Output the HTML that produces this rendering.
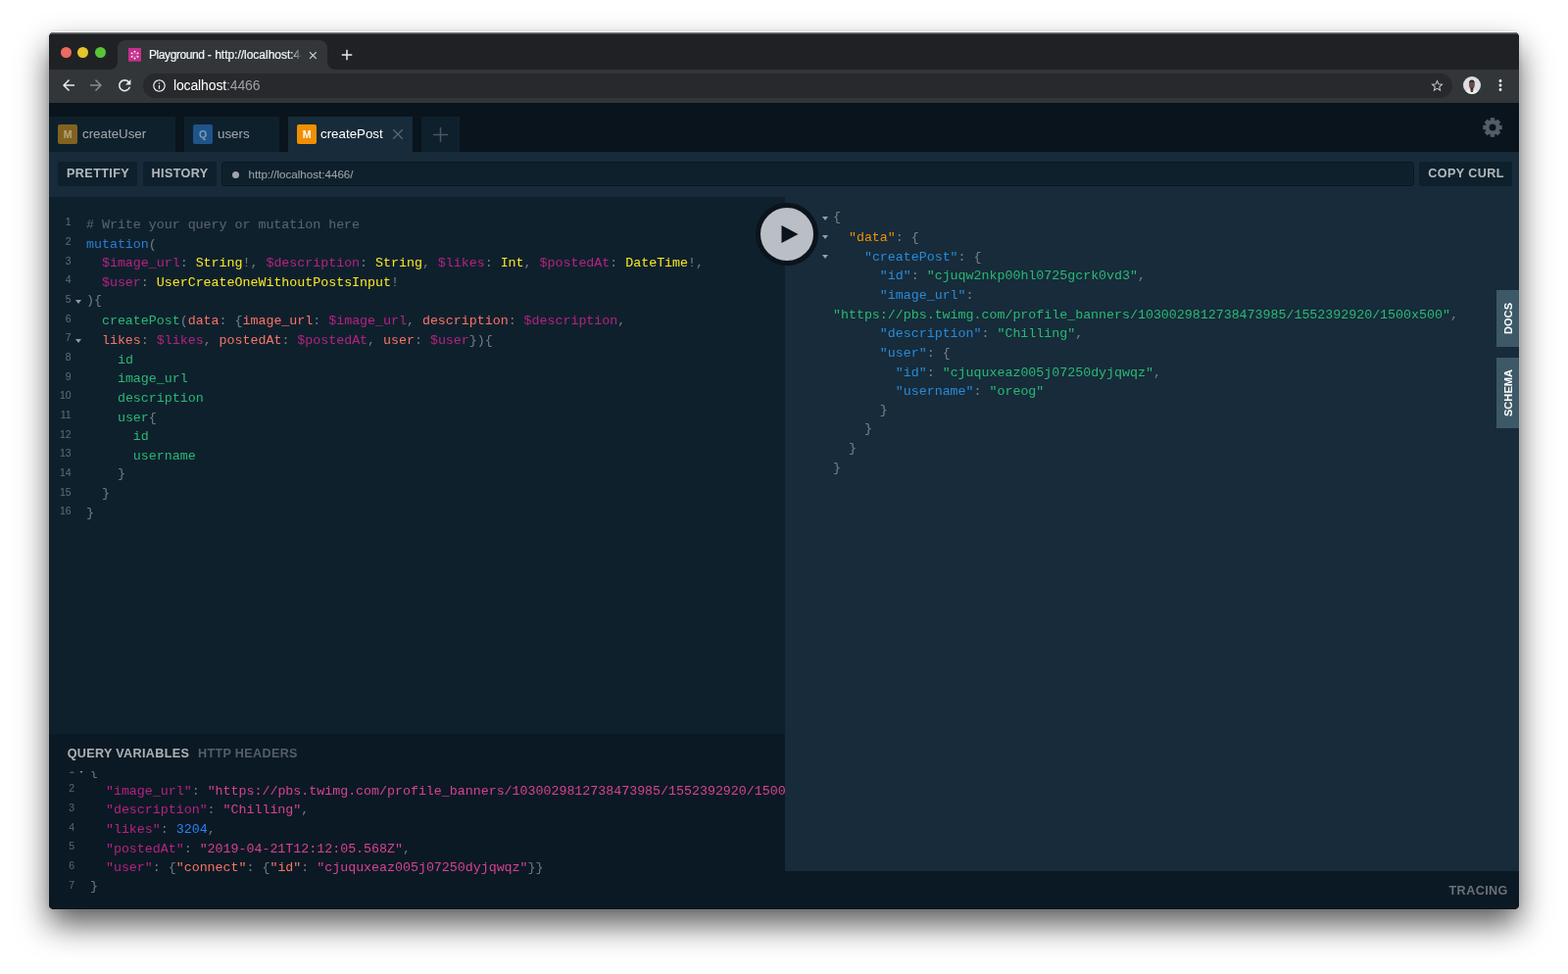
<!DOCTYPE html>
<html lang="en">
<head>
<meta charset="utf-8">
<title>Playground - http://localhost:4466</title>
<style>
*{box-sizing:border-box;margin:0;padding:0}
html,body{width:1600px;height:994px;background:#fff;overflow:hidden}
body{position:relative;font-family:"Liberation Sans",Arial,sans-serif;-webkit-font-smoothing:antialiased}
.abs{position:absolute}
#shadow{position:absolute;left:50px;top:33px;width:1500px;height:895px;border-radius:6px;
  box-shadow:0 0 0 1px rgba(255,255,255,.13),0 0 4px rgba(0,0,0,.18),0 16px 32px 0 rgba(0,0,0,.64)}
#win{position:absolute;left:50px;top:33px;width:1500px;height:895px;border-radius:5px;overflow:hidden;background:#0f202d;will-change:transform;transform:translateZ(0)}
/* ---------- chrome ---------- */
#strip{left:0;top:0;width:1500px;height:38px;background:#202124}
#hl{left:0;top:0;width:1500px;height:2px;background:linear-gradient(#75787b 0,#75787b 1px,#484b50 1px,#484b50 2px)}
#tl{position:absolute;left:53px;top:32px;width:1494px;height:1px;background:rgba(255,255,255,.75)}
.tl{width:11px;height:11px;border-radius:50%;top:14.6px}
#ctab{left:70px;top:8px;width:214px;height:30px;background:#323639;border-radius:8px 8px 0 0}
#ctab:before,#ctab:after{content:"";position:absolute;bottom:0;width:8px;height:8px;background:radial-gradient(circle at 0 0,rgba(50,54,57,0) 7.5px,#323639 8.5px)}
#ctab:before{left:-8px}
#ctab:after{right:-8px;transform:scaleX(-1)}
#fav{left:81px;top:17px;width:13px;height:13px;background:#d5309b}
#ctitle{-webkit-text-stroke:.2px #f1f3f4;left:102px;top:16px;width:156px;height:15px;font-size:12px;line-height:15px;color:#f1f3f4;white-space:nowrap;overflow:hidden;
  -webkit-mask-image:linear-gradient(90deg,#000 145px,transparent 156px);mask-image:linear-gradient(90deg,#000 145px,transparent 156px)}
#tbar{left:0;top:38px;width:1500px;height:33.5px;background:#323639;z-index:3}
#omni{left:95.8px;top:42.2px;width:1336px;height:24.8px;border-radius:12.4px;background:#27292c;z-index:4}
#url{z-index:5;left:127px;top:46px;font-size:14px;line-height:17px;color:#fff;white-space:nowrap;letter-spacing:-.14px}
#url i{font-style:normal;color:#9aa0a6}
/* ---------- playground ---------- */
#pg{left:0;top:71px;width:1500px;height:824px;background:#09141c}
.tab{top:15px;height:36px;background:#0f202d}
.tab.on{background:#172b3a}
.ico{top:8px;width:20px;height:20px;border-radius:2px;color:#fff;font-size:10.5px;font-weight:bold;line-height:20px;text-align:center}
.tn{top:9px;font-size:13.33px;line-height:18px;color:rgba(255,255,255,.6);white-space:nowrap}
#nav{left:0;top:51px;width:1500px;height:46px;background:#172b3a}
.btn{top:10px;height:25px;background:#0f202d;border-radius:2px;color:rgba(255,255,255,.68);font-size:12.6px;font-weight:bold;line-height:25px;text-align:center;white-space:nowrap;letter-spacing:.4px;padding-left:1.2px}
#ep{left:176px;top:9.5px;width:1217px;height:25.6px;background:#0f202d;border:1px solid rgba(9,20,28,.75);border-radius:4px}
#ept{left:203.5px;top:14.5px;font-size:11.6px;line-height:16px;color:rgba(255,255,255,.6);white-space:nowrap}
#edit{left:0;top:97px;width:751px;height:549px;background:#0f202d;overflow:hidden}
#res{left:751px;top:97px;width:749px;height:688px;background:#172b3a;overflow:hidden}
#foot{left:751px;top:785px;width:749px;height:39px;background:#0b1924}
#draw{left:0;top:645px;width:751px;height:179px;background:#0b1924;overflow:hidden}
.code{position:absolute;font-family:"Liberation Mono","DejaVu Sans Mono",monospace;font-size:13.33px;line-height:19.667px;white-space:pre;color:rgba(255,255,255,.4);letter-spacing:-.025px}
.ln{position:absolute;font-family:"Liberation Sans",Arial,sans-serif;font-size:10.5px;line-height:19.667px;text-align:right;color:rgba(255,255,255,.33);white-space:pre}
.r{position:relative;top:-1.3px}
.c{color:rgba(255,255,255,.3)}
.k{color:#2a7ed3}
.v{color:#b52282}
.t{color:#f9e922}
.a{color:#f77466}
.p{color:#29b973}
.d{color:#f18f01}
.b{color:#2a8ad8}
.s{color:#d64292}
.n{color:#2882f9}
.fa{position:absolute;width:0;height:0;border-left:3.5px solid transparent;border-right:3.5px solid transparent;border-top:4px solid rgba(255,255,255,.55)}
.side{left:726px;width:23px;background:#3d5866;color:#fff}
.side span{position:absolute;left:50%;top:50%;transform:translate(-50%,-50%) rotate(-90deg);font-size:11px;font-weight:bold;line-height:12px;white-space:nowrap;letter-spacing:.08px}
</style>
</head>
<body>
<div id="shadow"></div>
<div id="tl"></div>
<div id="win">
  <!-- chrome tab strip -->
  <div id="strip" class="abs"></div>
  <div id="hl" class="abs"></div>
  <div class="abs tl" style="left:11.5px;background:#ec6a5e"></div>
  <div class="abs tl" style="left:29.4px;background:#e5c527"></div>
  <div class="abs tl" style="left:47.300px;background:#5ac33a"></div>
  <div id="ctab" class="abs"></div>
  <svg class="abs" style="z-index:6;left:81px;top:16.3px" width="13" height="13.700" viewBox="0 0 13 13.700"><rect width="13" height="13.700" fill="#c72e8d"/><path d="M6.500 3.600L9.530 8.850H3.470Z" fill="none" stroke="#fff" stroke-width=".5" opacity=".45"/><circle cx="6.50" cy="3.60" r=".95" fill="#fff"/><circle cx="9.53" cy="5.35" r=".95" fill="#fff"/><circle cx="9.53" cy="8.85" r=".95" fill="#fff"/><circle cx="6.50" cy="10.60" r=".95" fill="#fff"/><circle cx="3.47" cy="8.85" r=".95" fill="#fff"/><circle cx="3.47" cy="5.35" r=".95" fill="#fff"/></svg>
  <div id="ctitle" class="abs"><span style="letter-spacing:-.42px">Playground</span> - <span style="letter-spacing:-.02px">http://localhost:4466</span></div>
  <div id="tbar" class="abs"></div>
  <div id="omni" class="abs"></div>
  <svg class="abs" style="z-index:6;left:10.70px;top:45.30px" width="18" height="18" viewBox="0 0 24 24"><path d="M20 11H7.83l5.59-5.59L12 4l-8 8 8 8 1.41-1.41L7.83 13H20v-2z" fill="#e8eaed"/></svg>
  <svg class="abs" style="z-index:6;left:39.30px;top:45.30px" width="18" height="18" viewBox="0 0 24 24"><path d="M12 4l-1.41 1.41L16.17 11H4v2h12.17l-5.58 5.59L12 20l8-8z" fill="#868a8f"/></svg>
  <svg class="abs" style="z-index:6;left:67.55px;top:45.15px" width="18.5" height="18.5" viewBox="0 0 24 24"><path d="M17.65 6.35C16.2 4.9 14.21 4 12 4c-4.42 0-7.99 3.58-7.99 8s3.57 8 7.99 8c3.73 0 6.84-2.55 7.73-6h-2.08c-.82 2.33-3.04 4-5.65 4-3.31 0-6-2.69-6-6s2.69-6 6-6c1.66 0 3.14.69 4.22 1.78L13 11h7V4l-2.35 2.35z" fill="#e8eaed"/></svg>
  <svg class="abs" style="z-index:6;left:105.30px;top:47.25px" width="15" height="15" viewBox="0 0 24 24"><path d="M11 17h2v-6h-2v6zm1-15C6.48 2 2 6.48 2 12s4.48 10 10 10 10-4.48 10-10S17.52 2 12 2zm0 18c-4.41 0-8-3.59-8-8s3.59-8 8-8 8 3.59 8 8-3.59 8-8 8zM11 9h2V7h-2v2z" fill="#e8eaed"/></svg>
  <svg class="abs" style="z-index:6;left:1408.50px;top:47.10px" width="15" height="15" viewBox="0 0 24 24"><path d="M22 9.24l-7.19-.62L12 2 9.19 8.63 2 9.24l5.46 4.73L5.82 21 12 17.27 18.18 21l-1.63-7.03L22 9.24zM12 15.4l-3.76 2.27 1-4.28-3.32-2.88 4.38-.38L12 6.1l1.71 4.04 4.38.38-3.32 2.88 1 4.28L12 15.4z" fill="#c8cbcf"/></svg>
  <svg class="abs" style="z-index:6;left:1471.90px;top:45.00px" width="18" height="18" viewBox="0 0 24 24"><path d="M12 8c1.1 0 2-.9 2-2s-.9-2-2-2-2 .9-2 2 .9 2 2 2zm0 2c-1.1 0-2 .9-2 2s.9 2 2 2 2-.9 2-2-.9-2-2-2zm0 6c-1.1 0-2 .9-2 2s.9 2 2 2 2-.9 2-2-.9-2-2-2z" fill="#e8eaed"/></svg>
  <svg class="abs" style="z-index:6;left:263.10px;top:16.90px" width="12.800" height="12.800" viewBox="0 0 24 24"><path d="M19 6.41L17.59 5 12 10.59 6.41 5 5 6.41 10.59 12 5 17.59 6.41 19 12 13.41 17.59 19 19 17.59 13.41 12z" fill="#dadce0"/></svg>
  <svg class="abs" style="z-index:6;left:295.10px;top:14.20px" width="18" height="18" viewBox="0 0 24 24"><path d="M19 13h-6v6h-2v-6H5v-2h6V5h2v6h6v2z" fill="#e8eaed"/></svg>
  <div class="abs" style="z-index:6;left:1442.7px;top:45.1px;width:18px;height:18px;border-radius:50%;overflow:hidden"><svg style="display:block" width="18" height="18" viewBox="0 0 18 18"><rect width="18" height="18" fill="#dcdfe1"/><path d="M3.2 18c.3-3.6 2.4-5 5.6-5s5.4 1.400 5.700 5z" fill="#eef0f1"/><path d="M7.300 12.500h3.200l-.4 3.400h-2.400z" fill="#5b4037"/><ellipse cx="8.9" cy="8.400" rx="2.900" ry="3.900" fill="#6a4a3e"/><path d="M6 7.200c0-2.600 1.300-3.700 2.900-3.700s2.900 1.100 2.900 3.700c-.8-1.300-1.800-1.700-2.900-1.700s-2.100.4-2.900 1.700z" fill="#23262b"/><path d="M7.200 10.800c.5 1.300 2.900 1.300 3.400 0-.3 1.900-.9 2.700-1.700 2.700s-1.400-.8-1.700-2.700z" fill="#2a2326"/></svg></div>
  <div id="url" class="abs">localhost<i>:4466</i></div>

  <!-- playground -->
  <div id="pg" class="abs">
    <div class="abs tab" style="left:0;width:129px"><div class="abs ico" style="left:9px;background:#82621f;color:rgba(255,255,255,.42)">M</div><div class="abs tn" style="left:34px">createUser</div></div>
    <div class="abs tab" style="left:138px;width:97px"><div class="abs ico" style="left:9px;background:#1f5488;color:rgba(255,255,255,.42)">Q</div><div class="abs tn" style="left:34px">users</div></div>
    <div class="abs tab on" style="left:244px;width:127px"><div class="abs ico" style="left:9px;background:#f18f01">M</div><div class="abs tn" style="left:33px;color:#fff">createPost</div></div>
    <div class="abs tab" style="left:380px;width:39px"></div>

    <svg class="abs" style="z-index:6;left:350.4px;top:27.4px" width="12" height="12" viewBox="0 0 12 12"><path d="M1.200 1.200L10.800 10.800M10.800 1.200L1.200 10.800" stroke="rgba(255,255,255,.28)" stroke-width="1.300" fill="none"/></svg>
    <svg class="abs" style="z-index:6;left:391.5px;top:26.0px" width="15" height="15" viewBox="0 0 15 15"><path d="M7.500 0V15M0 7.500H15" stroke="#4a555f" stroke-width="1.500" fill="none"/></svg>
    <svg class="abs" style="z-index:6;left:1461.7px;top:15.0px" width="22" height="22" viewBox="0 0 24 24"><path d="M19.32 9.97 L22.02 10.07 L22.02 13.93 L19.32 14.03 L18.61 15.75 L20.44 17.72 L17.72 20.44 L15.75 18.61 L14.03 19.32 L13.93 22.02 L10.07 22.02 L9.97 19.32 L8.25 18.61 L6.28 20.44 L3.56 17.72 L5.39 15.75 L4.68 14.03 L1.98 13.93 L1.98 10.07 L4.68 9.97 L5.39 8.25 L3.56 6.28 L6.28 3.56 L8.25 5.39 L9.97 4.68 L10.07 1.98 L13.93 1.98 L14.03 4.68 L15.75 5.39 L17.72 3.56 L20.44 6.28 L18.61 8.25Z M12 7.600a4.400 4.400 0 1 0 0 8.800a4.400 4.400 0 1 0 0 -8.800Z" fill="#545e68" fill-rule="evenodd" stroke="#545e68" stroke-width="1.100" stroke-linejoin="round"/></svg>
    <div class="abs" style="left:720.5px;top:103px;width:64px;height:64px;border-radius:50%;background:#b9bfc4;border:5px solid #0b141c;z-index:5"><svg class="abs" style="z-index:6;left:0;top:0" width="54" height="54" viewBox="0 0 54 54"><path d="M21.500 18L38.500 27L21.500 36Z" fill="#0b141c"/></svg></div>
    <div id="nav" class="abs">
      <div class="abs btn" style="left:9px;width:81px">PRETTIFY</div>
      <div class="abs btn" style="left:95.5px;width:75px">HISTORY</div>
      <div id="ep" class="abs"></div>
      <div class="abs" style="left:186.5px;top:19.5px;width:7px;height:7px;border-radius:50%;background:rgba(255,255,255,.6)"></div>
      <div id="ept" class="abs">http://localhost:4466/</div>
      <div class="abs btn" style="left:1398px;width:95px">COPY CURL</div>
    </div>

    <div id="edit" class="abs">
      <div class="ln" style="left:0;top:16.3px;width:22.7px">1
2
3
4
5
6
7
8
9
10
11
12
13
14
15
16</div>
      <div class="fa" style="left:26.5px;top:105px"></div>
      <div class="fa" style="left:26.5px;top:144.5px"></div>
      <div class="code" style="left:38px;top:18.9px"><span class="c"># Write your query or mutation here</span>
<span class="k">mutation</span>(
  <span class="v">$image_url</span>: <span class="t">String</span>!, <span class="v">$description</span>: <span class="t">String</span>, <span class="v">$likes</span>: <span class="t">Int</span>, <span class="v">$postedAt</span>: <span class="t">DateTime</span>!,
  <span class="v">$user</span>: <span class="t">UserCreateOneWithoutPostsInput</span>!
<span class="r">){</span>
  <span class="p">createPost</span>(<span class="a">data</span>: {<span class="a">image_url</span>: <span class="v">$image_url</span>, <span class="a">description</span>: <span class="v">$description</span>,
  <span class="a">likes</span>: <span class="v">$likes</span>, <span class="a">postedAt</span>: <span class="v">$postedAt</span>, <span class="a">user</span>: <span class="v">$user</span>}){
    <span class="p">id</span>
    <span class="p">image_url</span>
    <span class="p">description</span>
    <span class="p">user</span>{
      <span class="p">id</span>
      <span class="p">username</span>
    <span class="r">}</span>
  <span class="r">}</span>
<span class="r">}</span></div>
    </div>
    <div id="res" class="abs">
      <div class="fa" style="left:37.5px;top:19.5px"></div>
      <div class="fa" style="left:37.5px;top:39px"></div>
      <div class="fa" style="left:37.5px;top:58.7px"></div>
      <div class="code" style="left:49px;top:12.4px"><span class="r">{</span>
  <span class="d">"data"</span>: {
    <span class="b">"createPost"</span>: {
      <span class="b">"id"</span>: <span class="p">"cjuqw2nkp00hl0725gcrk0vd3"</span>,
      <span class="b">"image_url"</span>:
<span class="p">"https://pbs.twimg.com/profile_banners/1030029812738473985/1552392920/1500x500"</span>,
      <span class="b">"description"</span>: <span class="p">"Chilling"</span>,
      <span class="b">"user"</span>: {
        <span class="b">"id"</span>: <span class="p">"cjuquxeaz005j07250dyjqwqz"</span>,
        <span class="b">"username"</span>: <span class="p">"oreog"</span>
      <span class="r">}</span>
    <span class="r">}</span>
  <span class="r">}</span>
<span class="r">}</span></div>
      <div class="abs side" style="top:94.5px;height:58px"><span>DOCS</span></div>
      <div class="abs side" style="top:163.5px;height:72px"><span>SCHEMA</span></div>
    </div>
    <div id="foot" class="abs"><div class="abs" style="right:11.2px;top:13px;font-size:12.6px;font-weight:bold;line-height:14px;letter-spacing:.42px;color:#6b7078;white-space:nowrap">TRACING</div></div>
    <div id="draw" class="abs">
      <div class="abs" style="left:18.700px;top:11.6px;font-size:12.6px;font-weight:bold;line-height:16px;letter-spacing:.34px;color:rgba(255,255,255,.66);white-space:nowrap">QUERY VARIABLES</div>
      <div class="abs" style="left:152px;top:11.6px;font-size:12.6px;font-weight:bold;line-height:16px;letter-spacing:.34px;color:#555e66;white-space:nowrap">HTTP HEADERS</div>
      <div class="abs" style="left:0;top:37.5px;width:751px;height:142px;overflow:hidden">
        <div class="ln" style="left:0;top:-10.9px;width:26.2px">1
2
3
4
5
6
7</div>
        <div class="fa" style="left:30px;top:-1.5px"></div>
        <div class="code" style="left:42px;top:-8.4px">{
  <span class="v">"image_url"</span>: <span class="s">"https://pbs.twimg.com/profile_banners/1030029812738473985/1552392920/1500x500"</span>,
  <span class="v">"description"</span>: <span class="s">"Chilling"</span>,
  <span class="v">"likes"</span>: <span class="n">3204</span>,
  <span class="v">"postedAt"</span>: <span class="s">"2019-04-21T12:12:05.568Z"</span>,
  <span class="v">"user"</span>: {<span class="a">"connect"</span>: {<span class="a">"id"</span>: <span class="s">"cjuquxeaz005j07250dyjqwqz"</span>}}
<span class="r">}</span></div>
      </div>
    </div>
  </div>
</div>
</body>
</html>
